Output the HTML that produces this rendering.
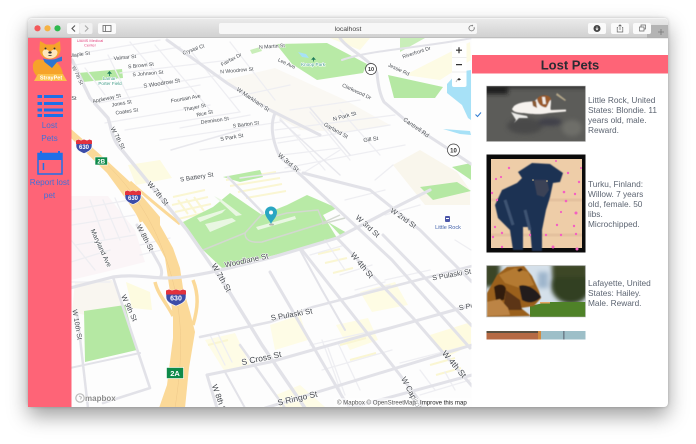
<!DOCTYPE html>
<html><head><meta charset="utf-8"><title>StrayPet</title>
<style>
html,body{margin:0;padding:0;width:696px;height:444px;overflow:hidden;background:#fff;font-family:"Liberation Sans",sans-serif}
#win{position:absolute;left:28px;top:18px;width:640px;height:389px;border-radius:4px;background:#fff;box-shadow:0 9px 20px rgba(0,0,0,.38),0 0 3px rgba(0,0,0,.2);overflow:hidden}
#full{position:absolute;left:0;top:0}
.abs{position:absolute;white-space:nowrap}
.pt{font-size:8.300px;color:#5d6572;left:588px;line-height:10px}
.nav{font-size:8.200px;color:#4270d8;width:43px;left:28px;text-align:center;line-height:13px}
</style></head><body>
<div id="win"></div>
<svg id="full" width="696" height="444" viewBox="0 0 696 444" font-family="Liberation Sans, sans-serif">
<defs>
<linearGradient id="tb" x1="0" y1="0" x2="0" y2="1"><stop offset="0" stop-color="#ebebeb"/><stop offset="1" stop-color="#d0d0d0"/></linearGradient>
<clipPath id="m"><rect x="71.500" y="38" width="400" height="369"/></clipPath>
<clipPath id="w"><path d="M28 38V22.500a4 4 0 0 1 4-4H664a4 4 0 0 1 4 4V38Z"/></clipPath>
<filter id="b0" x="0" y="0" width="1" height="1"><feGaussianBlur stdDeviation=".35"/></filter>
<filter id="b"><feGaussianBlur stdDeviation=".6"/></filter>
<filter id="b2"><feGaussianBlur stdDeviation="2"/></filter>
<clipPath id="i1"><rect x="486.500" y="86" width="99" height="55.500"/></clipPath>
<clipPath id="i2"><rect x="486.500" y="154.500" width="99" height="98"/></clipPath>
<clipPath id="i3"><rect x="486.500" y="265.500" width="99" height="51.500"/></clipPath>
</defs>
<!-- title bar -->
<g clip-path="url(#w)">
<rect x="28" y="18" width="640" height="20" fill="url(#tb)"/>
<rect x="647" y="25" width="21" height="13" fill="#b4b4b4"/>
</g>
<rect x="28" y="37.500" width="640" height=".7" fill="#aaa"/>
<circle cx="37.500" cy="28.300" r="3.100" fill="#f4595a"/><circle cx="47.500" cy="28.300" r="3.100" fill="#f6b243"/><circle cx="57.500" cy="28.300" r="3.100" fill="#2fb94e"/>
<rect x="67" y="23" width="12.500" height="11" rx="2" fill="#fafafa"/><rect x="80" y="23" width="12.500" height="11" rx="2" fill="#f1f1f1"/>
<path d="M75 25.500l-3 3 3 3" fill="none" stroke="#555" stroke-width="1.100"/><path d="M85 25.500l3 3-3 3" fill="none" stroke="#aaa" stroke-width="1.100"/>
<rect x="98" y="23" width="18" height="11" rx="2" fill="#fafafa"/>
<rect x="103" y="25.500" width="8" height="6" fill="none" stroke="#666" stroke-width=".8"/><path d="M105.500 25.500v6" stroke="#666" stroke-width=".8"/>
<rect x="219" y="23" width="258" height="11" rx="2" fill="#f7f7f7"/>
<text x="348" y="31.200" font-size="6.800" fill="#444" text-anchor="middle">localhost</text>
<path d="M474 27a2.700 2.700 0 1 1-1.200-1.200" fill="none" stroke="#777" stroke-width=".8"/><path d="M472 24.500l1.300 1.300-1.500.8z" fill="#777"/>
<rect x="588" y="23" width="18" height="11" rx="2" fill="#fafafa"/><circle cx="597" cy="28.500" r="3.500" fill="#444"/><path d="M597 26.500v3M595.800 28.500l1.200 1.500 1.200-1.500" stroke="#fff" stroke-width=".7" fill="none"/>
<rect x="611" y="23" width="18" height="11" rx="2" fill="#fafafa"/><path d="M618 27.500h-.8v4.500h5.600v-4.500h-.8M620 30v-5M618.500 26.300l1.500-1.500 1.500 1.500" fill="none" stroke="#666" stroke-width=".7"/>
<rect x="633" y="23" width="18" height="11" rx="2" fill="#fafafa"/><path d="M639.500 27h4.500v4h-4.500zM641 27v-2h4.500v4H644" fill="none" stroke="#666" stroke-width=".7"/>
<path d="M658 32h6M661 29v6" stroke="#777" stroke-width=".8"/>

<!-- map -->
<g clip-path="url(#m)">
<g filter="url(#b0)">
<rect x="71" y="38" width="401" height="370" fill="#fdfdfd"/>
<!-- tinted areas -->
<polygon points="225,80 275,68 345,100 390,125 345,132 300,130 270,112" fill="#faf8f3"/>
<polygon points="71,196 108,196 135,230 145,262 105,272 71,280" fill="#fbf5f7"/>
<polygon points="75,282 112,280 124,305 85,315 72,312" fill="#f9f6f0"/>
<polygon points="393,165 420,150 457,172 470,190 470,205 425,205" fill="#f9f6ec"/>
<polygon points="128,165 160,160 172,178 136,185" fill="#fdfbe2"/>
<polygon points="205,340 235,333 250,365 225,372" fill="#fefce6"/>
<polygon points="336,325 368,318 378,340 350,350" fill="#fefce4"/>
<polygon points="360,292 395,282 408,305 372,312" fill="#fefce4"/>
<polygon points="430,335 471,322 471,345 445,358" fill="#fefbe0"/>
<polygon points="270,325 300,315 308,340 275,350" fill="#fefce6"/>
<polygon points="126,282 150,292 152,310 132,308" fill="#fdfbe0"/>
<polygon points="405,75 470,42 471,60 440,80" fill="#fdfbe4"/>
<polygon points="330,38 370,38 360,50" fill="#fdfbe4"/>
<polygon points="276,395 300,385 325,407 280,407" fill="#fefce6"/>
<!-- cream hatch rows -->
<g stroke="#faf6d2" stroke-width="2" fill="none">
<path d="M172 205l36-8M175 212l36-8M178 219l30-7M173 197l32-7M226 180l50-8M230 186l50-8M238 192l44-8M246 198l40-7"/>
<path d="M178 200l10 14M186 199l10 14M194 197l10 14"/>
<path d="M318 254l22-5M325 263l22-5M333 273l20-5M208 345l20-5M340 345l26-7M350 360l26-7M430 365l25-7M436 375l25-7"/>
</g>
<!-- water -->
<polygon points="471,70 458,72 447,84 447,93 462,105 468,118 471,120" fill="#a7e1f7"/>
<polygon points="443,129 470,131 471,135 460,134" fill="#a7e1f7"/>
<!-- green -->
<polygon points="78,73 122,69 123,78 83,82" fill="#b5e8a3"/>
<polygon points="276,44 327,43 367,64 363,73 317,80 292,64" fill="#b8eaa6"/>
<polygon points="388,75 443,87 435,98 394,98" fill="#b5e8a3"/>
<polygon points="420,187 457,182 471,191 433,200" fill="#b5e8a3"/>
<polygon points="452,167 471,163 471,180" fill="#b5e8a3"/>
<polygon points="183,222 213,207 230,193 262,215 287,205 307,195 337,208 323,215 337,238 283,253 222,268 203,250" fill="#b8eaa6"/>
<polygon points="223,177 260,170 263,177 240,182" fill="#b8eaa6"/>
<polygon points="328,222 347,233 340,235" fill="#b8eaa6"/>
<polygon points="84,311 125,305 137,350 85,362" fill="#b5e8a3"/>
<polygon points="250,50 260,47 262,51 252,54" fill="#c9eeb9"/>
<polygon points="400,38 425,38 400,52" fill="#c9eeb9"/>
<!-- buildings in park -->
<g fill="#e9f7e2"><polygon points="197,218 226,209 222,213 200,222"/><polygon points="214,196 222,200 242,215 236,216"/><polygon points="205,224 232,218 236,221 210,232"/><polygon points="256,227 295,216 296,219 258,230"/></g>
<!-- minor street grid -->
<g fill="none" stroke="#eeeef2" stroke-width="1.300" stroke-linecap="round">
<path d="M71 55L160 40M75 65L180 47M120 73L230 60M125 90L220 75M98 103L200 85M105 123L210 105M125 130L240 112M160 140L280 122M200 150L300 135"/>
<path d="M130 42L170 90M155 45L210 110M190 50L240 112M230 42L275 100M108 55L130 100M85 68L105 95"/>
<path d="M180 128L250 115M230 98L290 85M290 110L360 100M275 130L395 115M278 143L390 125M282 155L340 148M285 168L405 145"/>
<path d="M310 112L350 160M340 110L380 155M280 118L325 170"/>
<path d="M300 175L340 150M375 180L393 165"/>
<path d="M71 210L130 200M72 225L135 215M75 245L135 235M71 262L110 250M90 200L105 240M103 200L120 240M115 198L130 232"/>
<path d="M71 240L95 270M71 282L110 282"/>
<path d="M210 335L225 365M217 332L232 362M355 295L390 285M310 345L400 325M322 370L392 350"/>
<path d="M322 340L335 375L345 405M328 348L345 395M338 343L360 390"/>
<path d="M400 363L470 345M420 395L470 380M420 370L435 390M445 372L455 390M385 280L430 270M455 240L471 250"/>
<path d="M310 255L345 245M325 240L345 270M340 275L372 265M355 290L385 282"/>
<path d="M345 200L385 190M385 215L420 205"/>
<path d="M140 245L170 238M140 255L170 248"/>
</g>
<g fill="none" stroke="#e8e8ed" stroke-width="1.500" stroke-linecap="round">
<path d="M240 178L300 170M171 150L240 130"/>
<path d="M280 120L340 175M310 108L350 155"/>
</g>
<!-- park paths -->
<g fill="none" stroke="#d3d8d0" stroke-width="1.500">
<path d="M263 213L245 233L203 250"/>
<path d="M245 233C245 240 250 243 262 242L320 224L340 215M323 222L318 210L287 213L268 218"/>
<path d="M322 224L345 218"/>
</g>
<!-- highway -->
<polygon points="71,129 103,157 130,182 160,217 160,225 173,248 180,268 183,288 190,312 195,332 189,368 185,408 159,408 167,385 173,338 173,318 170,292 165,258 158,245 145,225 107,173 71,138" fill="#fbd998"/>
<g fill="none" stroke="#fbd998">
<path d="M155 282C158 295 168 305 173 316" stroke-width="3.500"/>
<path d="M193 280C199 295 198 308 193 325" stroke-width="3.500"/>
<path d="M130 182C150 200 165 212 180 224" stroke-width="3"/>
<path d="M122 190C130 205 138 212 141 222" stroke-width="2.500"/>
<path d="M100 158C130 185 160 225 175 290C181 320 184 350 175 408" stroke="#efc98a" stroke-width=".5"/>
</g>
<!-- main streets -->
<g fill="none" stroke="#e2e2e8" stroke-width="3" stroke-linejoin="round" stroke-linecap="round">
<path d="M72 60L90 98L108 118C112 130 112 140 122 150L187 230L227 288L262 345L305 408" stroke-width="3.400"/>
<path d="M167 40L227 83L270 110L320 135"/>
<path d="M340 38C348 50 372 60 377 73C378 85 380 95 384 102L410 124L450 150L471 164"/>
<path d="M342 60C370 50 420 48 472 38" stroke-width="2"/>
<path d="M275 113C270 125 272 140 280 157L303 177L360 230L392 260L470 348" stroke-width="3"/>
<path d="M303 173L370 190L420 230L472 282"/>
<path d="M228 177L263 213" stroke-width="2.500"/>
<path d="M137 225L158 262C163 270 162 275 160 278"/>
<path d="M70 288L113 277C135 274 150 278 167 278C195 278 240 265 270 258L337 238L400 205L430 190" stroke-width="3.200"/>
<path d="M113 277L150 388L103 403" stroke-width="2.600"/>
<path d="M77 312L88 408" stroke-width="2.500"/>
<path d="M70 368L140 353" stroke-width="2"/>
<path d="M302 250L400 375L425 408"/>
<path d="M337 238L413 318L472 386"/>
<path d="M270 272L343 398L350 408"/>
<path d="M383 235L472 326"/>
<path d="M200 337L270 322L313 307L472 266" stroke-width="2.600"/>
<path d="M207 375L270 362L472 305"/>
<path d="M207 375L217 408"/>
<path d="M265 408L472 345"/>
<path d="M240 345L285 408" stroke-width="2.500"/>
<path d="M225 372L245 408" stroke-width="2"/>
<path d="M350 408L472 375"/>
<path d="M300 250L322 290L345 330" stroke-width="2"/>
</g>
<!-- labels -->
<g fill="#464a50" font-size="5.200" text-anchor="middle" stroke="#fff" stroke-width="1.100" paint-order="stroke" stroke-linejoin="round">
<text transform="translate(80 56) rotate(-8)">Maple St</text>
<text transform="translate(125 59) rotate(-6)">Valmar St</text>
<text transform="translate(141 67) rotate(-6)">S Brown St</text>
<text transform="translate(148 75) rotate(-5)">S Johnson St</text>
<text transform="translate(162 85) rotate(-9)" font-size="5.800">S Woodrow St</text>
<text transform="translate(194 51) rotate(-20)">Crystal Ct</text>
<text transform="translate(232 61) rotate(-28)">Fairfax Dr</text>
<text transform="translate(237 72) rotate(-5)">N Woodrow St</text>
<text transform="translate(252 101) rotate(34)" font-size="5.800">W Markham St</text>
<text transform="translate(272 48) rotate(-4)">N Martin St</text>
<text transform="translate(186 100) rotate(-10)">Fountain Ave</text>
<text transform="translate(195 109) rotate(-12)">Thayer St</text>
<text transform="translate(205 115) rotate(-12)">Rice St</text>
<text transform="translate(215 122) rotate(-8)">Dennison St</text>
<text transform="translate(246 126) rotate(-7)">S Barton St</text>
<text transform="translate(232 139) rotate(-10)" font-size="5.500">S Park St</text>
<text transform="translate(107 100) rotate(-12)">Appleway St</text>
<text transform="translate(122 105) rotate(-10)">Jones St</text>
<text transform="translate(127 113) rotate(-8)">Coates St</text>
<text transform="translate(76 76) rotate(65)">W 7th St</text>
<text transform="translate(116 139) rotate(62)" font-size="6.300">W 7th St</text>
<text transform="translate(156 195) rotate(50)" font-size="7.500">W 7th St</text>
<text transform="translate(197 179) rotate(-9)" font-size="6.300">S Battery St</text>
<text transform="translate(143 239) rotate(62)" font-size="7.400">W 8th St</text>
<text transform="translate(99 249) rotate(65)" font-size="6.800">Maryland Ave</text>
<text transform="translate(127 309) rotate(65)" font-size="7.400">W 9th St</text>
<text transform="translate(75 325) rotate(80)" font-size="7">W 10th St</text>
<text transform="translate(219 279) rotate(60)" font-size="8.200">W 7th St</text>
<text transform="translate(247 263) rotate(-12)" font-size="7.800">Woodlane St</text>
<text transform="translate(217 400) rotate(70)" font-size="8">W 8th St</text>
<text transform="translate(262 361) rotate(-12)" font-size="8.500">S Cross St</text>
<text transform="translate(292 317) rotate(-10)" font-size="7.800">S Pulaski St</text>
<text transform="translate(452 277) rotate(-10)" font-size="7.300">S Pulaski St</text>
<text transform="translate(360 267) rotate(50)" font-size="8">W 4th St</text>
<text transform="translate(452 366) rotate(50)" font-size="8.500">W 4th St</text>
<text transform="translate(409 394) rotate(62)" font-size="8">W Capitol</text>
<text transform="translate(298 401) rotate(-13)" font-size="8.500">S Ringo St</text>
<text transform="translate(287 164) rotate(40)" font-size="6.500">W 3rd St</text>
<text transform="translate(366 228) rotate(42)" font-size="7.500">W 3rd St</text>
<text transform="translate(402 220) rotate(35)" font-size="7.200">W 2nd St</text>
<text transform="translate(415 129) rotate(35)" font-size="6">Cantrell Rd</text>
<text transform="translate(345 118) rotate(-15)" font-size="5.600">N Park St</text>
<text transform="translate(335 132) rotate(30)" font-size="5.600">Garland St</text>
<text transform="translate(371 141) rotate(-8)" font-size="5.600">Gill St</text>
<text transform="translate(356 93) rotate(25)">Clarkwood Dr</text>
<text transform="translate(398 71) rotate(25)">Jessie Rd</text>
<text transform="translate(417 54) rotate(-18)">Riverfront Dr</text>
<text transform="translate(286 65) rotate(25)">Lee Ave</text>
<text transform="translate(467 309) rotate(-10)" font-size="7.300">S Pu</text>
<text x="448" y="229" fill="#3f5fa8" font-size="5.500">Little Rock</text>
<text x="74" y="100" font-size="5.500">St</text>
<text x="313" y="66" fill="#3f9b86" font-size="4.600">Knoop Park</text>
<text x="110" y="80" fill="#3f9b86" font-size="4.500">Lamar-</text>
<text x="110" y="85" fill="#3f9b86" font-size="4.500">Porter Field</text>
<text x="90" y="42" fill="#e0457e" font-size="4">UAMS Medical</text>
<text x="90" y="46.500" fill="#e0457e" font-size="4">Center</text>
</g>
<path d="M109.500 71l2.500 2.800h-5zM109.200 73.500h.8v2.500h-.8z" fill="#1f7a5a"/>
<path d="M313.500 57l2.400 2.700h-4.800zM313.100 59h.8v2.500h-.8z" fill="#1f7a5a"/>
<polygon points="298,52 306,54 309,58 302,57" fill="#a7e1f7"/>
<rect x="445" y="216" width="5" height="6" rx="1" fill="#4b57a8"/><rect x="446" y="218" width="3" height="1" fill="#fff"/>
<!-- shields -->
<g text-anchor="middle">
<g transform="translate(84 146)"><path d="M-8-5.500l2.500-1 2.500 1 3-1 3 1 2.500-1 2.500 1V0c0 4-4 6-8 7.500C-4 6-8 4-8 0Z" fill="#3d4ea8" stroke="#fff" stroke-width=".6"/><path d="M-8-5.500l2.500-1 2.500 1 3-1 3 1 2.500-1 2.500 1V-2H-8Z" fill="#e2303e"/><text y="2.800" font-size="6" fill="#fff" font-weight="bold">630</text></g>
<g transform="translate(133 197)"><path d="M-8-5.500l2.500-1 2.500 1 3-1 3 1 2.500-1 2.500 1V0c0 4-4 6-8 7.500C-4 6-8 4-8 0Z" fill="#3d4ea8" stroke="#fff" stroke-width=".6"/><path d="M-8-5.500l2.500-1 2.500 1 3-1 3 1 2.500-1 2.500 1V-2H-8Z" fill="#e2303e"/><text y="2.800" font-size="6" fill="#fff" font-weight="bold">630</text></g>
<g transform="translate(176 297)"><path d="M-10-6.500l3-1 3 1 4-1 4 1 3-1 3 1V0c0 5-5 7-10 9C-5 7-10 5-10 0Z" fill="#3d4ea8" stroke="#fff" stroke-width=".6"/><path d="M-10-6.500l3-1 3 1 4-1 4 1 3-1 3 1V-2.500H-10Z" fill="#e2303e"/><text y="3.300" font-size="7" fill="#fff" font-weight="bold">630</text></g>
<rect x="95" y="157" width="12.500" height="8" fill="#0f8a4a" stroke="#fff" stroke-width=".6"/><text x="101.200" y="163.300" font-size="6" fill="#fff" font-weight="bold">2B</text>
<rect x="166.500" y="367.500" width="17" height="11" fill="#0f8a4a" stroke="#fff" stroke-width=".6"/><text x="175" y="376" font-size="7.500" fill="#fff" font-weight="bold">2A</text>
<circle cx="371" cy="69" r="5.500" fill="#fff" stroke="#333" stroke-width=".7"/><text x="371" y="71.200" font-size="5.500" fill="#333" font-weight="bold">10</text>
<circle cx="453.500" cy="150" r="6" fill="#fff" stroke="#333" stroke-width=".7"/><text x="453.500" y="152.300" font-size="6" fill="#333" font-weight="bold">10</text>
</g>
<!-- pin -->
<path d="M271 224c-1-3-6-7-6-11.500a6 6 0 0 1 12 0c0 4.500-5 8.500-6 11.500Z" fill="#2aa6c2"/><circle cx="271" cy="212.500" r="2" fill="#fff"/><ellipse cx="271.500" cy="224.500" rx="2.500" ry="1" fill="#777" opacity=".5"/>
<!-- controls -->
<rect x="452" y="43" width="14.500" height="44" rx="2" fill="#fff"/><path d="M452 57.500h14.500M452 72h14.500" stroke="#ddd" stroke-width=".5"/>
<path d="M456 50.200h6M459 47.200v6M456 64.600h6" stroke="#333" stroke-width="1.200"/>
<path d="M457 79.500l2-1.500 2 1.500-2 1z" fill="#333"/><path d="M456 82l1.500-2.500" stroke="#bbb"/>
<!-- attribution -->
<circle cx="80" cy="398" r="4.200" fill="none" stroke="#bbb" stroke-width="1.200"/><path d="M79 396l2.500 1.200-1 2.300" stroke="#bbb" fill="none"/>
<text x="85" y="401" font-size="8" fill="#8a8a8a" font-weight="bold" stroke="#fff" stroke-width="1" paint-order="stroke">mapbox</text>
<rect x="334" y="398" width="137" height="9" fill="#fff" opacity=".55"/>
<text x="337" y="404.500" font-size="6.100" fill="#555">© Mapbox © OpenStreetMap</text>
<text x="420" y="404.500" font-size="6.100" fill="#222">Improve this map</text>
</g>
</g>
<!-- sidebar -->
<rect x="28" y="38" width="43.500" height="369" fill="#fe6477"/>
<!-- logo -->
<g filter="url(#b0)">
<path d="M42 60C36 58 32 62 33 68C33 72 36 75 38 78L35 81H66L63 76C63 70 60 65 56 62Z" fill="#f6a32a"/>
<path d="M40 41L46 44.500H54L60 41L60.500 48C61 54 57 59 50 59C43 59 39 54 39.500 48Z" fill="#f5a42c"/>
<path d="M42.500 52C44 48.500 47 49 50 52C53 49 56 48.500 57.500 52C57.500 56 54 58.500 50 58.500C46 58.500 42.500 56 42.500 52Z" fill="#fde6bc"/>
<circle cx="45.500" cy="48.500" r="1" fill="#333"/><circle cx="54.500" cy="48.500" r="1" fill="#333"/><ellipse cx="50" cy="52.500" rx="1.700" ry="1.100" fill="#333"/><path d="M47.700 55q2.300 1.800 4.600 0z" fill="#333"/>
<path d="M43 58.500C47 60 54 60 57 58.500L62 56.500L62 61L57 62L52 68L44.500 62Z" fill="#2e74d0"/>
<path d="M34 81L38 74H63L67 81Z" fill="#fbc04a"/>
<text x="51" y="79.500" font-size="5.500" fill="#fff" font-weight="bold" text-anchor="middle">StrayPet</text>
</g>
<!-- list icon -->
<g fill="#1e6fe8">
<rect x="37.500" y="95" width="4.500" height="3"/><rect x="44" y="95" width="19" height="3"/>
<rect x="37.500" y="102" width="4.500" height="3"/><rect x="44" y="102" width="19" height="3"/>
<rect x="37.500" y="108.500" width="4.500" height="3"/><rect x="44" y="108.500" width="19" height="3"/>
<rect x="37.500" y="114" width="4.500" height="3"/><rect x="44" y="114" width="19" height="3"/>
</g>
<!-- calendar -->
<rect x="38" y="153.500" width="24" height="20.500" fill="none" stroke="#1e6fe8" stroke-width="1.500"/>
<rect x="38" y="153.500" width="24" height="6.500" fill="#1e6fe8"/>
<rect x="40" y="151" width="2" height="5" fill="#1e6fe8"/><rect x="58" y="151" width="2" height="5" fill="#1e6fe8"/>
<rect x="42.700" y="163" width="1.500" height="7" fill="#1e6fe8"/>
<!-- right panel -->
<rect x="472" y="55" width="196" height="18.500" fill="#fe6477"/>
<text x="570" y="69.300" font-size="13" font-weight="bold" fill="#2b2b33" text-anchor="middle">Lost Pets</text>
<path d="M475.500 114.500l2 2 3.500-4" fill="none" stroke="#2f7bd0" stroke-width="1"/>
<!-- img1 -->
<g clip-path="url(#i1)">
<rect x="486" y="86" width="100" height="56" fill="#5c5c59"/>
<g filter="url(#b2)">
<rect x="484" y="84" width="24" height="10" fill="#1f1f1f"/><rect x="484" y="84" width="104" height="4" fill="#2c2c2c"/>
<ellipse cx="525" cy="126" rx="18" ry="8" fill="#4a4a48"/>
<ellipse cx="550" cy="122" rx="12" ry="4" fill="#3f4048"/>
<ellipse cx="572" cy="128" rx="10" ry="8" fill="#6e6e69"/>
</g>
<g filter="url(#b)">
<path d="M514 106C521 101 530 102 535 101C539 95 551 94 551 101C551 106 550 109 551 110L566 109.500V111.500L549 113C540 115 530 114 524 113C518 113 513 112 512 109Z" fill="#f6f2ee"/>
<path d="M511 112L516 120L514 123L519 118L528 118L527 116L517 114Z" fill="#ecebe8"/>
<path d="M532 101L536 101L537 108L533 106Z" fill="#8a5a30"/>
<path d="M537 99C540 94 551 94 551 100C549 100 548 106 546 107.500C541 107 538 104 537 99Z" fill="#9a5a2a"/>
<path d="M542 97h3l1 7-3 0z" fill="#f3efea"/>
<path d="M557 93l9 7-1 1-9-6z" fill="#b5a88a"/>
</g>
</g>
<rect x="486.500" y="86" width="99" height="55.500" fill="none" stroke="#bbb" stroke-width=".5"/>
<!-- img2 -->
<g clip-path="url(#i2)">
<rect x="486" y="154" width="100" height="99" fill="#0b0b0b"/>
<rect x="491" y="159" width="91" height="89" fill="#eecda8"/>
<path d="M491 200h91M491 235h91" stroke="#dcb795" stroke-width="3" opacity=".5"/>
<g filter="url(#b)">
<path d="M518 172L532 163L550 164L563 173L560 182L553 183L550 197L546 210L542 230L542 251L532 251L530 227L523 227L523 250L513 250L510 230L498 218L495 205L502 190L517 183L522 178Z" fill="#1f3352"/>
<path d="M534 180L547 180L549 190L544 197L537 195Z" fill="#3a4256"/>
<path d="M505 200l8 25M525 210l5 20" stroke="#3c5272" stroke-width="3" fill="none"/>
</g>
<circle cx="533" cy="180" r=".8" fill="#e0c890"/><circle cx="547" cy="181" r=".8" fill="#e0c890"/>
<g fill="#f45fc2">
<circle cx="509" cy="168" r="1.200"/><circle cx="496" cy="179" r="1.100"/><circle cx="501" cy="177" r="1.100"/><circle cx="556" cy="161" r="1"/><circle cx="568" cy="173" r="1.200"/><circle cx="579" cy="182" r="1.200"/><circle cx="564" cy="192" r="1.300"/><circle cx="575" cy="194" r="1.200"/><circle cx="566" cy="201" r="1.300"/><circle cx="561" cy="212" r="1.100"/><circle cx="576" cy="213" r="1.500"/><circle cx="557" cy="225" r="1.200"/><circle cx="574" cy="226" r="1.200"/><circle cx="495" cy="227" r="1.200"/><circle cx="502" cy="233" r="1.200"/><circle cx="530" cy="235" r="1.200"/><circle cx="546" cy="235" r="1.200"/><circle cx="561" cy="235" r="1.200"/><circle cx="576" cy="234" r="1.200"/><circle cx="493" cy="237" r="1.200"/><circle cx="502" cy="247" r="1.200"/><circle cx="553" cy="247" r="1.500"/><circle cx="577" cy="249" r="1.500"/><circle cx="492" cy="193" r="1.200"/><circle cx="497" cy="200" r="1.200"/><circle cx="581" cy="168" r="1"/></g>
</g>
<!-- img3 -->
<g clip-path="url(#i3)">
<rect x="486" y="265" width="100" height="52" fill="#d5e0ea"/>
<g filter="url(#b2)">
<rect x="484" y="263" width="16" height="24" fill="#3a4426"/>
<ellipse cx="571" cy="285" rx="20" ry="19" fill="#333f20"/>
<rect x="552" y="263" width="36" height="14" fill="#3e4628"/>
<rect x="538" y="272" width="10" height="16" fill="#9fb6cc"/>
</g>
<path d="M530 306L548 302H586V318H530Z" fill="#4f8228"/>
<g filter="url(#b)">
<path d="M487 293L497 275L507 267L524 266L532 276L539 291L541 298L534 306L521 308L531 316L487 317Z" fill="#9a601f"/>
<path d="M499 275L515 268L528 272L534 285L520 288L505 283Z" fill="#b47a30"/>
<path d="M519 286C527 283 537 290 541 297C536 303 528 304 522 300Z" fill="#221d1a"/>
<path d="M494 287C499 283 505 284 506 289L504 300L496 301Z" fill="#301a0c"/>
<path d="M506 290L520 300L522 310L503 310Z" fill="#5c3414"/>
<path d="M487 302L500 299L508 308L510 315L487 316Z" fill="#bc8444"/>
<path d="M517 270l4-2 2 2-4 2z" fill="#3a2010"/>
</g>
<rect x="540" y="302" width="10" height="1.500" fill="#e5a560"/>
</g>
<rect x="486.500" y="265.500" width="99" height="51.500" fill="none" stroke="#bbb" stroke-width=".5"/>
<!-- img4 -->
<rect x="486.500" y="331" width="53" height="8.500" fill="#b66a44"/>
<rect x="486.500" y="331" width="53" height="2" fill="#5a5040"/>
<rect x="538" y="331" width="3" height="8.500" fill="#d08a40"/>
<rect x="541" y="331" width="44.500" height="8.500" fill="#9dbfc8"/>
<rect x="563.500" y="331" width=".8" height="8.500" fill="#445"/>
</svg>
<div class="abs nav" style="top:119px">Lost</div>
<div class="abs nav" style="top:132px">Pets</div>
<div class="abs nav" style="top:176px">Report lost</div>
<div class="abs nav" style="top:189px">pet</div>
<div class="abs pt" style="top:94.500px">Little Rock, United</div>
<div class="abs pt" style="top:104.500px">States: Blondie. 11</div>
<div class="abs pt" style="top:114.500px">years old, male.</div>
<div class="abs pt" style="top:124.500px">Reward.</div>
<div class="abs pt" style="top:178.500px">Turku, Finland:</div>
<div class="abs pt" style="top:188.500px">Willow. 7 years</div>
<div class="abs pt" style="top:198.500px">old, female. 50</div>
<div class="abs pt" style="top:208.500px">libs.</div>
<div class="abs pt" style="top:218.500px">Microchipped.</div>
<div class="abs pt" style="top:277.500px">Lafayette, United</div>
<div class="abs pt" style="top:287.500px">States: Hailey.</div>
<div class="abs pt" style="top:297.500px">Male. Reward.</div>
</body></html>
